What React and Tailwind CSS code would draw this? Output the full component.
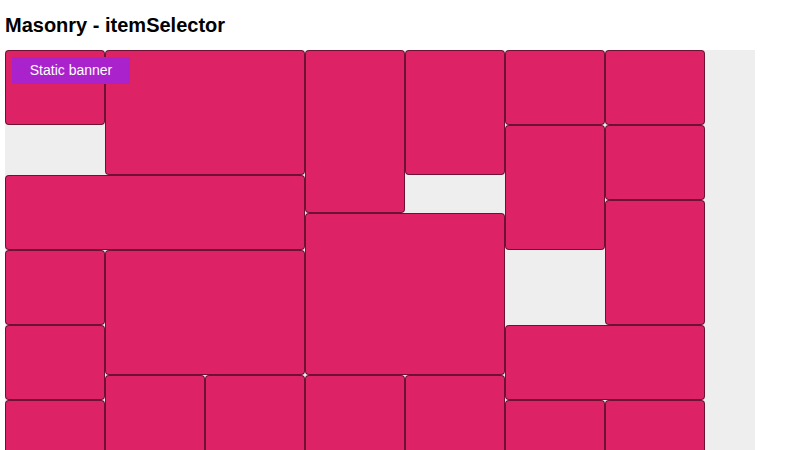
const items = [
  "col-start-1 row-start-1 row-span-6",
  "col-start-2 col-span-2 row-start-1 row-span-10",
  "col-start-4 row-start-1 row-span-13",
  "col-start-5 row-start-1 row-span-10",
  "col-start-6 row-start-1 row-span-6",
  "col-start-7 row-start-1 row-span-6",
  "col-start-6 row-start-7 row-span-10",
  "col-start-7 row-start-7 row-span-6",
  "col-start-1 col-span-3 row-start-11 row-span-6",
  "col-start-4 col-span-2 row-start-14 row-span-13",
  "col-start-7 row-start-13 row-span-10",
  "col-start-1 row-start-17 row-span-6",
  "col-start-2 col-span-2 row-start-17 row-span-10",
  "col-start-1 row-start-23 row-span-6",
  "col-start-6 col-span-2 row-start-23 row-span-6",
  "col-start-2 row-start-27 row-span-10",
  "col-start-3 row-start-27 row-span-10",
  "col-start-4 row-start-27 row-span-10",
  "col-start-5 row-start-27 row-span-10",
  "col-start-1 row-start-29 row-span-10",
  "col-start-6 row-start-29 row-span-10",
  "col-start-7 row-start-29 row-span-10",
];

const App = () => {
  return (
    <div className="p-[5px] font-['Liberation_Sans',Arial,sans-serif] text-black bg-white">
      <h1 className="text-[20px] leading-[23px] font-bold mt-[9px] mb-[13px]">Masonry - itemSelector</h1>
      <div className="relative w-[750px] bg-[#eeeeee] grid grid-cols-[repeat(7,100px)] auto-rows-[12.5px]">
        <div className="absolute left-[7px] top-[7px] w-[118px] h-[27px] bg-[#aa22cc] text-white text-[14px] flex items-center justify-center z-10">
          Static banner
        </div>
        {items.map((cls, i) => (
          <div key={i} className={`${cls} bg-[#dd2266] border border-[rgba(0,0,0,0.5)] rounded-[4px]`} />
        ))}
      </div>
    </div>
  );
};

export default App;
